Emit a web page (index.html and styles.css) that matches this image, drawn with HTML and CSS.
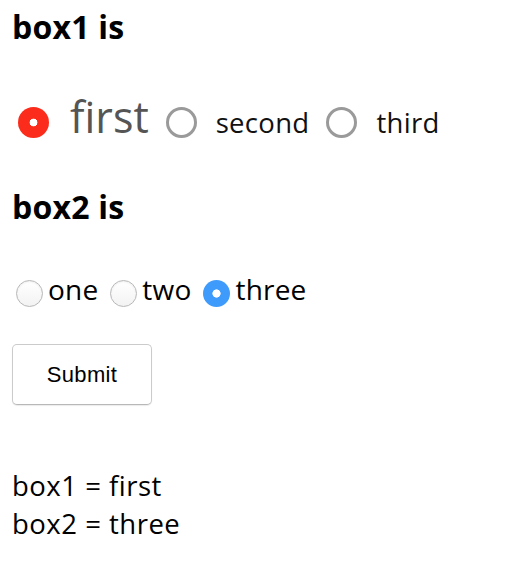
FILE: index.html
```html
<!DOCTYPE html>
<html lang="en">
<head>
<meta charset="utf-8">
<title>Radio groups</title>
<link rel="stylesheet" href="styles.css">
</head>
<body>
<main class="page">
  <h2 class="heading heading-first">box1 is</h2>
  <div class="row-big">
    <label class="opt-big opt-first">
      <input class="radio-big" type="radio" name="box1" value="first" checked>
      <span class="text-first">first</span>
    </label>
    <label class="opt-big">
      <input class="radio-big" type="radio" name="box1" value="second">
      <span class="text-big">second</span>
    </label>
    <label class="opt-big">
      <input class="radio-big" type="radio" name="box1" value="third">
      <span class="text-big">third</span>
    </label>
  </div>

  <h2 class="heading heading-second">box2 is</h2>
  <div class="row-small">
    <label class="opt-small opt-first-small">
      <input class="radio-small" type="radio" name="box2" value="one">
      <span class="text-small">one</span>
    </label>
    <label class="opt-small">
      <input class="radio-small" type="radio" name="box2" value="two">
      <span class="text-small">two</span>
    </label>
    <label class="opt-small">
      <input class="radio-small" type="radio" name="box2" value="three" checked>
      <span class="text-small">three</span>
    </label>
  </div>

  <button class="submit" type="button">Submit</button>

  <div class="output">
    <div>box1 = first</div>
    <div>box2 = three</div>
  </div>
</main>
</body>
</html>
```

FILE: styles.css
```css
html, body {
  margin: 0;
  padding: 0;
  background: #ffffff;
}

body {
  font-family: "Open Sans", "Noto Sans", sans-serif;
  color: #111111;
}

.page {
  padding: 0 12px;
}

.heading {
  margin: 0;
  font-size: 32px;
  font-weight: 700;
  letter-spacing: 0.2px;
  line-height: 40px;
  color: #000000;
}

.heading-first {
  margin-top: 7px;
}

.heading-second {
  margin-top: 48px;
}

/* ---- box1 row ---- */
.row-big {
  display: flex;
  align-items: flex-end;
  margin-top: 48px;
  height: 44px;
}

.opt-big {
  display: flex;
  align-items: flex-end;
  gap: 19px;
  margin-left: 17px;
}

.opt-big.opt-first {
  margin-left: 6px;
  gap: 21px;
}

.radio-big {
  -webkit-appearance: none;
  appearance: none;
  margin: 0 0 1px 0;
  width: 31px;
  height: 31px;
  box-sizing: border-box;
  border-radius: 50%;
  border: 3px solid #9a9a9a;
  background: #ffffff;
  flex: none;
}

.radio-big:checked {
  border: none;
  background: radial-gradient(circle, #ffffff 0 3.6px, #fb2c1b 4.2px);
}

.text-first {
  font-size: 43px;
  line-height: 44px;
  color: #555555;
}

.text-big {
  font-size: 27.5px;
  letter-spacing: 0.3px;
  line-height: 32px;
  color: #111111;
}

/* ---- box2 row ---- */
.row-small {
  display: flex;
  align-items: flex-start;
  margin-top: 47px;
  height: 33px;
}

.opt-small {
  display: flex;
  align-items: flex-start;
  gap: 5px;
  margin-left: 12px;
}

.opt-small.opt-first-small {
  margin-left: 4px;
}

.radio-small {
  -webkit-appearance: none;
  appearance: none;
  margin: 6px 0 0 0;
  width: 27px;
  height: 27px;
  box-sizing: border-box;
  border-radius: 50%;
  border: 1px solid #b8b8b8;
  background: linear-gradient(#ffffff, #f3f3f3);
  box-shadow: inset 0 1px 2px rgba(0, 0, 0, 0.07);
  flex: none;
}

.radio-small:checked {
  border: none;
  box-shadow: none;
  background: radial-gradient(circle, #ffffff 0 3.8px, #3f9bfb 4.4px);
}

.text-small {
  font-size: 28px;
  letter-spacing: 0.2px;
  line-height: 30px;
  color: #000000;
}

/* ---- button ---- */
.submit {
  display: block;
  margin-top: 37px;
  width: 140px;
  height: 61px;
  box-sizing: border-box;
  background: #ffffff;
  border: 1px solid #cbcbcb;
  border-bottom-color: #b8b8b8;
  border-radius: 5px;
  box-shadow: 0 1px 1px rgba(0, 0, 0, 0.08);
  font-family: "Liberation Sans", Arial, sans-serif;
  font-size: 22px;
  letter-spacing: 0.3px;
  color: #000000;
  padding: 0;
}

/* ---- output ---- */
.output {
  margin-top: 62px;
  font-size: 27.5px;
  letter-spacing: 0.5px;
  line-height: 38px;
  color: #000000;
}
```
